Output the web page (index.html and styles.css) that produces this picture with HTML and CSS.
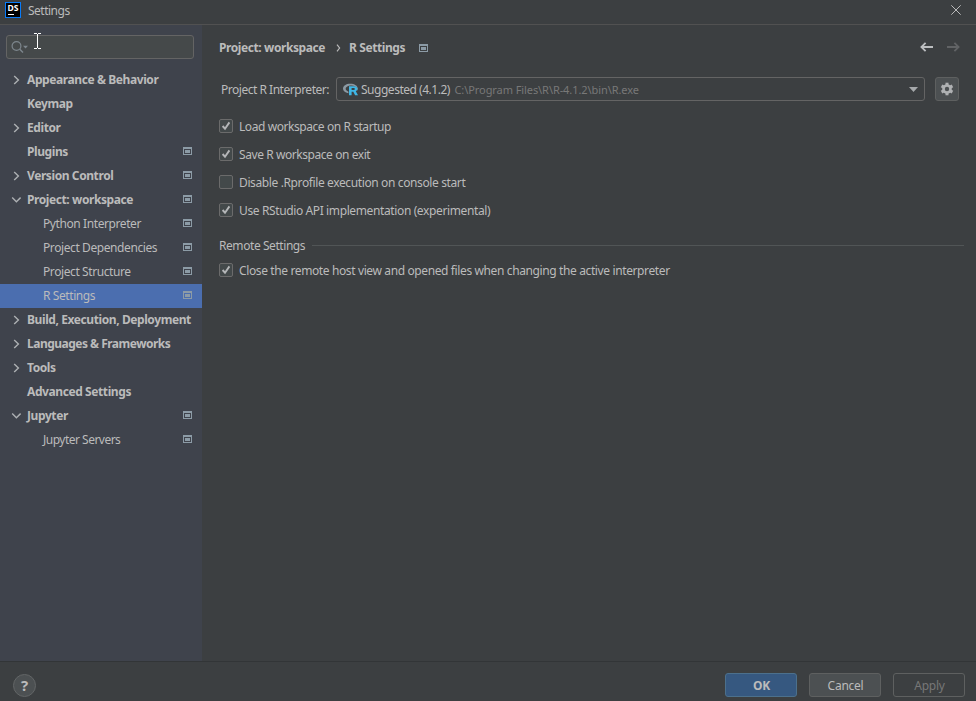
FILE: index.html
```html
<!DOCTYPE html>
<html lang="en">
<head>
<meta charset="utf-8">
<title>Settings</title>
<link rel="stylesheet" href="styles.css">
</head>
<body>
<svg width="0" height="0" class="defs">
  <symbol id="right" viewBox="0 0 10 10"><path d="M3.2 1 7.4 5 3.2 9" fill="none" stroke="#adb0b3" stroke-width="1.4"/></symbol>
  <symbol id="down" viewBox="0 0 10 10"><path d="M1.2 2.6 5.4 6.8 9.6 2.6" fill="none" stroke="#adb0b3" stroke-width="1.4"/></symbol>
  <symbol id="proj" viewBox="0 0 9 8"><path fill-rule="evenodd" d="M0 0h9v8H0zM1 2v5h7V2z" fill="#8c9ba6"/><path d="M2 3h5v3H2z" fill="#8c9ba6"/></symbol>
  <symbol id="check" viewBox="0 0 12 12"><path d="M2.6 6 5 8.7 9.4 2.4" fill="none" stroke="#b4b6b8" stroke-width="1.9"/></symbol>
</svg>
<header class="titlebar">
  <svg class="logo" width="16" height="16" viewBox="0 0 16 16"><rect width="16" height="16" fill="#087cfa"/><rect x="1" y="1" width="14" height="14" fill="#000"/><text x="2.4" y="8.6" textLength="11" lengthAdjust="spacingAndGlyphs">DS</text><path d="M3 12h6v1H3z" fill="#fff"/></svg>
  <span class="title">Settings</span>
  <svg class="close" width="10" height="10" viewBox="0 0 10 10"><path d="M.3.3l9.4 9.4M9.7.3.3 9.7" stroke="#bbb" fill="none"/></svg>
</header>
<div class="main">
  <aside class="sidebar">
    <div class="search">
      <svg width="18" height="14" viewBox="0 0 18 14"><circle cx="5.5" cy="6" r="4.4" fill="none" stroke="#7d868d" stroke-width="1.2"/><path d="m8.8 9.2 3.2 3.4" stroke="#7d868d" stroke-width="1.4"/><path d="M12 5.8h5l-2.5 2.8z" fill="#7d868d"/></svg>
      <svg class="cursor" width="7" height="16" viewBox="0 0 7 16"><path d="M0 .5h3M4 .5h3M3.5 1v14M0 15.5h3M4 15.5h3" stroke="#fff" fill="none"/></svg>
    </div>
    <nav class="tree">
      <div class="row"><svg class="arrow"><use href="#right"/></svg><span>Appearance &amp; Behavior</span></div>
      <div class="row"><i class="arrow"></i><span>Keymap</span></div>
      <div class="row"><svg class="arrow"><use href="#right"/></svg><span>Editor</span></div>
      <div class="row"><i class="arrow"></i><span>Plugins</span><svg class="proj"><use href="#proj"/></svg></div>
      <div class="row"><svg class="arrow"><use href="#right"/></svg><span>Version Control</span><svg class="proj"><use href="#proj"/></svg></div>
      <div class="row"><svg class="arrow"><use href="#down"/></svg><span>Project: workspace</span><svg class="proj"><use href="#proj"/></svg></div>
      <div class="row child"><span>Python Interpreter</span><svg class="proj"><use href="#proj"/></svg></div>
      <div class="row child"><span>Project Dependencies</span><svg class="proj"><use href="#proj"/></svg></div>
      <div class="row child"><span>Project Structure</span><svg class="proj"><use href="#proj"/></svg></div>
      <div class="row child selected"><span>R Settings</span><svg class="proj"><use href="#proj"/></svg></div>
      <div class="row"><svg class="arrow"><use href="#right"/></svg><span>Build, Execution, Deployment</span></div>
      <div class="row"><svg class="arrow"><use href="#right"/></svg><span class="tight">Languages &amp; Frameworks</span></div>
      <div class="row"><svg class="arrow"><use href="#right"/></svg><span>Tools</span></div>
      <div class="row"><i class="arrow"></i><span>Advanced Settings</span></div>
      <div class="row"><svg class="arrow"><use href="#down"/></svg><span>Jupyter</span><svg class="proj"><use href="#proj"/></svg></div>
      <div class="row child"><span class="tight">Jupyter Servers</span><svg class="proj"><use href="#proj"/></svg></div>
    </nav>
  </aside>
  <section class="content">
    <div class="crumbs">
      <b class="crumb">Project: workspace</b>
      <svg class="sep" width="5" height="8" viewBox="0 0 5 8"><path d="M1 .7 3.6 4 1 7.3" fill="none" stroke="#bbb" stroke-width="1.2"/></svg>
      <b>R Settings</b>
      <svg class="proj"><use href="#proj"/></svg>
      <svg class="nav" width="40" height="10" viewBox="0 0 40 10"><path d="M13 5H1.5M5.6.8 1.4 5l4.2 4.2" fill="none" stroke="#bcbec0" stroke-width="1.8"/><path d="M27 5h11.5M34.4.8 38.6 5l-4.2 4.2" fill="none" stroke="#616365" stroke-width="1.8"/></svg>
    </div>
    <div class="interp">
      <label>Project R Interpreter:</label>
      <div class="combo">
        <svg width="16" height="13" viewBox="0 0 16 13"><path fill-rule="evenodd" d="M7.3.7C11.5.7 14.8 2.8 14.8 5.6S11.5 10.5 7.3 10.5 0 8.4 0 5.6 3.1.7 7.3.7zM8.3 2.4C5.2 2.4 2.7 3.8 2.7 5.7s2.5 3.2 5.6 3.2 5.3-1.3 5.3-3.2-2.2-3.3-5.3-3.3z" fill="#8b99a3"/><path d="M5.4 4H14v8H5.4z" fill="#3c3f41"/><path fill-rule="evenodd" d="M6 3.2h5.1c2.2 0 3.3 1 3.3 2.6 0 1.2-.6 2-1.6 2.4L15 12.2h-2.9L10.3 8.8H8.6v3.4H6zM8.6 5.1v1.8h2.1c.8 0 1.2-.3 1.2-.9s-.4-.9-1.2-.9z" fill="#3fb6e5"/></svg>
        <span class="name">Suggested (4.1.2)</span><span class="path">C:\Program Files\R\R-4.1.2\bin\R.exe</span>
        <svg class="drop" width="9" height="5" viewBox="0 0 9 5"><path d="M0 0h9L4.5 5z" fill="#a6a9ab"/></svg>
      </div>
      <button class="gear"><svg width="14" height="14" viewBox="-7 -7 14 14"><g fill="#afb1b3"><rect x="-1.5" y="-6.3" width="3" height="12.6"/><rect x="-1.5" y="-6.3" width="3" height="12.6" transform="rotate(60)"/><rect x="-1.5" y="-6.3" width="3" height="12.6" transform="rotate(120)"/><circle r="4.8"/></g><circle r="2.2" fill="#4c5052"/></svg></button>
    </div>
    <div class="checks">
      <label class="check"><svg><use href="#check"/></svg><span class="short">Load workspace on R startup</span></label>
      <label class="check"><svg><use href="#check"/></svg><span class="short">Save R workspace on exit</span></label>
      <label class="check"><svg></svg><span>Disable .Rprofile execution on console start</span></label>
      <label class="check"><svg><use href="#check"/></svg><span>Use RStudio API implementation (experimental)</span></label>
    </div>
    <div class="group"><span>Remote Settings</span><i></i></div>
    <label class="check"><svg><use href="#check"/></svg><span>Close the remote host view and opened files when changing the active interpreter</span></label>
  </section>
</div>
<footer class="footer">
  <button class="help">?</button>
  <button class="btn ok">OK</button>
  <button class="btn">Cancel</button>
  <button class="btn disabled">Apply</button>
</footer>
</body>
</html>
```
FILE: styles.css
```css
* { box-sizing: border-box; }
body {
  margin: 0; width: 976px; height: 701px; overflow: hidden;
  display: flex; flex-direction: column;
  background: #3c3f41; color: #bbb;
  font: 12px/16px "Noto Sans", "Open Sans", sans-serif;
  letter-spacing: -0.38px; white-space: nowrap;
}
svg { display: block; flex: none; }
.defs { position: absolute; }
button { font: inherit; letter-spacing: inherit; color: inherit; padding: 0; }
.titlebar { height: 25px; flex: none; display: flex; align-items: center; padding: 0 15px 4px 5px; border-bottom: 1px solid #515151; }
.logo { margin-top: -1px; }
.logo text { font: bold 8px "Noto Sans", sans-serif; fill: #fff; letter-spacing: 0; }
.title { margin: 2px 0 0 7px; letter-spacing: -0.5px; }
.close { margin-left: auto; }
.main { flex: 1; display: flex; min-height: 0; }
.sidebar { width: 202px; background: #3f434c; padding-top: 10px; }
.search { position: relative; margin: 0 8px 9px 6px; height: 24px; border: 1px solid #646464; border-radius: 3px; background: #45494a; padding: 4px 0 0 4px; }
.cursor { position: absolute; left: 27px; top: -3px; }
.row { height: 24px; display: flex; align-items: center; padding: 0 10px 0 11px; font-weight: 700; letter-spacing: -0.41px; }
.arrow { width: 10px; height: 10px; margin-right: 6px; flex: none; }
.row .proj { margin: -2px 0 0 auto; }
.proj { width: 9px; height: 8px; }
.child { padding-left: 43px; font-weight: 400; letter-spacing: -0.41px; }
.tight { letter-spacing: -0.51px; }
.selected { background: #4b6eaf; }
.content { flex: 1; padding: 14px 12px 0 17px; }
.crumbs { display: flex; align-items: center; height: 18px; letter-spacing: -0.41px; }
.sep { margin: 0 8px 0 11px; }
.crumbs .proj { margin-left: 14px; }
.nav { margin: -2px 4px 0 auto; }
.interp { display: flex; align-items: center; margin-top: 20px; padding: 0 5px 0 2px; height: 24px; }
.interp label { width: 115px; padding-top: 2px; letter-spacing: -0.48px; }
.combo { flex: 1; height: 24px; border: 1px solid #646464; border-radius: 3px; display: flex; align-items: center; padding: 0 6px 0 6px; }
.name { margin-left: 2px; padding-top: 2px; width: 93.5px; letter-spacing: -0.48px; }
.path { padding-top: 2px; color: #787878; font-size: 11px; letter-spacing: -0.08px; }
.drop { margin-left: auto; }
.gear { margin-left: 10px; width: 24px; height: 24px; border: 1px solid #5e6060; border-radius: 3px; background: #4c5052; display: grid; place-items: center; }
.checks { margin-top: 17px; display: grid; gap: 12px; }
.check { display: flex; align-items: center; height: 16px; }
.check span { padding-top: 2px; }
.check .short { letter-spacing: -0.43px; }
.check svg { width: 14px; height: 14px; border: 1px solid #6b6b6b; border-radius: 2px; background: #43494a; margin: -1px 6px 0 0; }
.group { display: flex; align-items: center; height: 16px; margin: 19px 0 9px; }
.group span { padding-top: 2px; letter-spacing: -0.43px; }
.group i { flex: 1; height: 1px; background: #515556; margin-left: 7px; }
.footer { height: 40px; flex: none; border-top: 1px solid #323537; display: flex; align-items: center; padding: 7px 11px 0 13px; gap: 12px; }
.help { width: 23px; height: 23px; border: 1px solid #626566; border-radius: 50%; background: #4c5052; font-weight: 700; font-size: 15px; line-height: 20px; margin-right: auto; }
.btn { width: 72px; height: 24px; border: 1px solid #5e6060; border-radius: 3px; background: #4c5052; padding: 1px 0 0 1px; letter-spacing: -0.25px; }
.ok { background: #365880; border-color: #4c708c; font-weight: 700; }
.disabled { background: none; color: #777; }
```
